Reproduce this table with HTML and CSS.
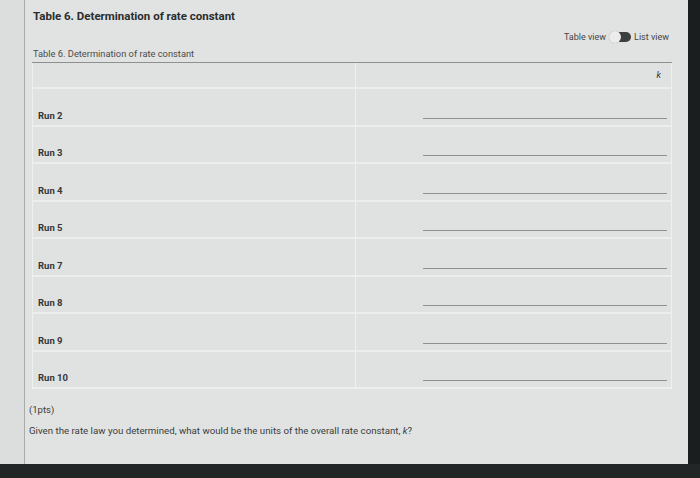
FILE: index.html
```html
<!DOCTYPE html>
<html lang="en">
<head>
<meta charset="utf-8">
<title>Table 6. Determination of rate constant</title>
<link rel="stylesheet" href="styles.css">
</head>
<body>
<div class="screen">
  <div class="sidebar"></div>
  <main class="content">
    <h1 class="title">Table 6. Determination of rate constant</h1>
    <div class="view-toggle">
      <span>Table view</span>
      <span class="switch"><span class="knob"></span></span>
      <span>List view</span>
    </div>
    <div class="caption">Table 6. Determination of rate constant</div>
    <div class="table">
      <div class="cell head"></div>
      <div class="cell head k"><i>k</i></div>

      <div class="cell label">Run 2</div>
      <div class="cell input"><span class="line"></span></div>
      <div class="cell label">Run 3</div>
      <div class="cell input"><span class="line"></span></div>
      <div class="cell label">Run 4</div>
      <div class="cell input"><span class="line"></span></div>
      <div class="cell label">Run 5</div>
      <div class="cell input"><span class="line"></span></div>
      <div class="cell label">Run 7</div>
      <div class="cell input"><span class="line"></span></div>
      <div class="cell label">Run 8</div>
      <div class="cell input"><span class="line"></span></div>
      <div class="cell label">Run 9</div>
      <div class="cell input"><span class="line"></span></div>
      <div class="cell label">Run 10</div>
      <div class="cell input"><span class="line"></span></div>
    </div>
    <p class="pts">(1pts)</p>
    <p class="question">Given the rate law you determined, what would be the units of the overall rate constant, <i>k</i>?</p>
  </main>
  <div class="bezel-right"></div>
  <div class="bezel-bottom"></div>
</div>
</body>
</html>
```
FILE: styles.css
```css
* { box-sizing: border-box; }
html, body { margin: 0; padding: 0; }
body {
  width: 700px;
  height: 478px;
  overflow: hidden;
  background: #1e2122;
  font-family: Roboto, "Liberation Sans", sans-serif;
  color: #2b2d2e;
}
.screen {
  display: grid;
  grid-template-columns: 25px 1fr 12px;
  grid-template-rows: 464px 14px;
  width: 700px;
  height: 478px;
}
.sidebar {
  background: #dcdedd;
  border-right: 1px solid #a9abaa;
}
.content {
  background: #e1e3e2;
  padding: 9px 16px 0 7px;
  display: flex;
  flex-direction: column;
}
.bezel-right { background: #1b1e1f; }
.bezel-bottom { grid-column: 1 / -1; background: #232627; }

.title {
  margin: 0;
  font-size: 11.5px;
  line-height: 14px;
  font-weight: 700;
  color: #2a2c2d;
  padding-left: 1px;
}
.view-toggle {
  margin-top: 8px;
  align-self: flex-end;
  display: flex;
  align-items: center;
  gap: 3px;
  font-size: 9px;
  line-height: 12px;
  color: #444;
  margin-right: 3px;
}
.switch {
  position: relative;
  width: 22px;
  height: 10px;
  border-radius: 5px;
  background: linear-gradient(90deg, #d0d2d1 45%, #3d3f40 46%);
}
.knob {
  position: absolute;
  left: 0;
  top: -1px;
  width: 12px;
  height: 12px;
  border-radius: 50%;
  background: #ececec;
  box-shadow: 0 0 1px rgba(0,0,0,0.3);
}
.caption {
  margin-top: 5px;
  font-size: 9.3px;
  line-height: 12px;
  color: #4a4c4d;
  padding: 0 0 2px 1px;
  border-bottom: 1px solid #8e9090;
}
.table {
  display: grid;
  grid-template-columns: 323px 1fr;
  grid-template-rows: 26px repeat(8, 37.5px);
  border-left: 1px solid #eef0ef;
}
.cell {
  border-right: 1px solid #eef0ef;
  border-bottom: 2px solid #eceeed;
  background: #e0e2e1;
  display: flex;
  align-items: flex-end;
}
.head.k {
  justify-content: flex-end;
  align-items: center;
  padding-right: 10px;
  font-size: 9px;
  color: #333;
}
.label {
  padding: 0 0 4px 5px;
  font-size: 9.5px;
  font-weight: 700;
  color: #353738;
}
.input {
  padding: 0 4px 6px 67px;
}
.line {
  display: block;
  width: 100%;
  height: 1px;
  background: #8f9191;
}
.pts {
  margin: 15px 0 0 -3px;
  font-size: 9.5px;
  line-height: 12px;
  color: #3a3c3d;
}
.question {
  margin: 9px 0 0 -3px;
  font-size: 9.7px;
  line-height: 12px;
  color: #3a3c3d;
}
```
